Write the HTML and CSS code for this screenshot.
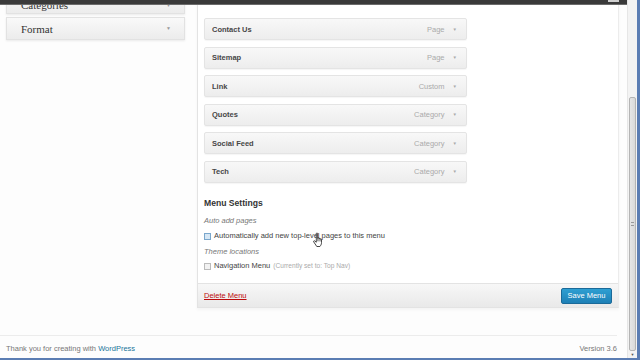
FILE: index.html
```html
<!DOCTYPE html>
<html lang="en">
<head>
    <meta charset="UTF-8">
    <meta name="viewport" content="width=device-width, initial-scale=1.0">
    <title>Menus</title>
    <link rel="stylesheet" href="styles.css">
</head>
<body>
    <div class="window">
        <div class="page">
            <div class="adminbar"><span class="adminbar-avatar"></span></div>

            <div class="columns">
                <div class="sidebar">
                    <div class="accordion-item cut">Categories <span class="caret">&#9660;</span></div>
                    <div class="accordion-item">Format <span class="caret">&#9660;</span></div>
                </div>

                <div class="menu-panel">
                    <div class="menu-body">
                        <ul class="menu-items">
                            <li class="menu-item"><span class="item-title">Contact Us</span><span class="item-type">Page</span><span class="caret">&#9660;</span></li>
                            <li class="menu-item"><span class="item-title">Sitemap</span><span class="item-type">Page</span><span class="caret">&#9660;</span></li>
                            <li class="menu-item"><span class="item-title">Link</span><span class="item-type">Custom</span><span class="caret">&#9660;</span></li>
                            <li class="menu-item"><span class="item-title">Quotes</span><span class="item-type">Category</span><span class="caret">&#9660;</span></li>
                            <li class="menu-item"><span class="item-title">Social Feed</span><span class="item-type">Category</span><span class="caret">&#9660;</span></li>
                            <li class="menu-item"><span class="item-title">Tech</span><span class="item-type">Category</span><span class="caret">&#9660;</span></li>
                        </ul>

                        <div class="menu-settings">
                            <h3>Menu Settings</h3>
                            <div class="setting-label">Auto add pages</div>
                            <label class="setting-row"><span class="checkbox hover"></span>Automatically add new top-level pages to this menu</label>
                            <div class="setting-label">Theme locations</div>
                            <label class="setting-row"><span class="checkbox"></span>Navigation Menu <span class="note">(Currently set to: Top Nav)</span></label>
                        </div>
                    </div>
                    <div class="menu-footer">
                        <a class="delete-link" href="#">Delete Menu</a>
                        <button class="save-btn">Save Menu</button>
                    </div>
                </div>
            </div>

            <div class="page-footer">
                <span>Thank you for creating with <a href="#">WordPress</a></span>
                <span>Version 3.6</span>
            </div>

            <svg class="cursor" width="12" height="16" viewBox="0 0 14 18">
                <path d="M5 1.5c0-.9 1.6-.9 1.6 0V7c0-.8 1.5-.8 1.5 0v.6c0-.8 1.5-.8 1.5 0v.6c0-.8 1.5-.8 1.5 0V12c0 2-.9 3.4-1.9 4.6H5.6L2 11.2c-.6-.8.4-1.7 1.2-1.1L5 11.6Z" fill="#fff" stroke="#111" stroke-width=".9" stroke-linejoin="round"/>
                <path d="M6.6 7v3.5M8.1 7.6v3M9.6 8.2v2.5" stroke="#111" stroke-width=".6" fill="none"/>
            </svg>
        </div>

        <div class="scrollbar">
            <div class="scroll-thumb"><span class="grip"></span></div>
            <div class="scroll-arrow">&#9660;</div>
        </div>
    </div>
</body>
</html>
```

FILE: styles.css
```css
* { box-sizing: border-box; }

body {
    margin: 0;
    font-family: "Liberation Sans", Arial, sans-serif;
    font-size: 7.5px;
    color: #333;
    background: #fff;
}

.window {
    width: 640px;
    height: 360px;
    display: flex;
    border-right: 3px solid #5b7db3;
    border-bottom: 2px solid #5b7db3;
    overflow: hidden;
}

.page {
    flex: 1;
    position: relative;
    display: flex;
    flex-direction: column;
    overflow: hidden;
    background: #fdfdfd;
}

.adminbar {
    position: absolute;
    top: 0;
    left: 0;
    right: 0;
    height: 5px;
    background: #3a3a3a;
    border-bottom: 1px solid #6b6b6b;
    z-index: 2;
}
.adminbar-avatar {
    position: absolute;
    right: 8px;
    top: 0;
    width: 11px;
    height: 2px;
    background: #cfcfcf;
}

.columns {
    display: flex;
    gap: 12px;
    padding-left: 6px;
}

/* left accordion */
.sidebar {
    width: 179px;
    display: flex;
    flex-direction: column;
    gap: 3px;
    margin-top: -9px;
}
.accordion-item {
    height: 23px;
    display: flex;
    align-items: center;
    justify-content: space-between;
    padding: 0 13px 0 14px;
    font-family: "Liberation Serif", "Times New Roman", serif;
    font-size: 11px;
    color: #333;
    background: linear-gradient(#f9f9f9, #ececec);
    border: 1px solid #e2e2e2;
    box-shadow: 0 1px 2px rgba(0, 0, 0, 0.08);
}
.accordion-item.cut {
    align-items: flex-end;
    padding-bottom: 2px;
}
.accordion-item .caret { font-size: 5px; color: #999; }
.accordion-item.cut .caret { padding-bottom: 3px; }

/* menu panel */
.menu-panel {
    width: 422px;
    display: flex;
    flex-direction: column;
    border-left: 1px solid #e3e3e3;
    border-right: 1px solid #ececec;
    border-bottom: 1px solid #e3e3e3;
    box-shadow: 0 2px 3px rgba(0, 0, 0, 0.04);
}
.menu-body {
    background: #fff;
    padding: 18px 6px 12px 6px;
}
.menu-items {
    list-style: none;
    margin: 0;
    padding: 0;
}
.menu-item {
    width: 263px;
    height: 22px;
    margin-bottom: 6.6px;
    display: flex;
    align-items: center;
    padding: 0 9px 0 7px;
    background: linear-gradient(#f8f8f8, #ededed);
    border: 1px solid #e4e4e4;
    border-radius: 2px;
    box-shadow: 0 1px 1px rgba(0, 0, 0, 0.04);
}
.item-title {
    flex: 1;
    font-weight: bold;
    color: #464646;
}
.item-type { color: #aaa; }
.menu-item .caret {
    font-size: 4.5px;
    color: #aaa;
    margin-left: 8px;
}

.menu-settings h3 {
    margin: 15px 0 0;
    font-size: 8.6px;
    line-height: 11px;
    color: #333;
}
.setting-label {
    margin-top: 7.5px;
    line-height: 10px;
    font-style: italic;
    color: #777;
}
.setting-row {
    display: flex;
    align-items: center;
    gap: 3px;
    margin-top: 5px;
    line-height: 10px;
    color: #444;
}
.setting-row + .setting-label { margin-top: 6px; }
.setting-label + .setting-row:last-child { margin-top: 4px; }
.checkbox {
    width: 7px;
    height: 7px;
    border: 1px solid #bbb;
    background: #f2f2f2;
}
.checkbox.hover {
    border-color: #7aa7cc;
    background: #d6e7f5;
}
.note { color: #aaa; font-size: 6.6px; }

.menu-footer {
    height: 24px;
    display: flex;
    align-items: center;
    justify-content: space-between;
    padding: 0 6px;
    background: linear-gradient(#f7f7f7, #e9e9e9);
    border-top: 1px solid #e3e3e3;
}
.delete-link {
    color: #bc0b0b;
    text-decoration: underline;
}
.save-btn {
    width: 51px;
    height: 16px;
    padding: 0;
    font-family: inherit;
    font-size: 7.5px;
    color: #fff;
    background: linear-gradient(#2e9fd2, #1e80b6);
    border: 1px solid #1b6a99;
    border-radius: 2px;
}

/* page footer */
.page-footer {
    margin-top: auto;
    margin-right: 10px;
    height: 23px;
    display: flex;
    justify-content: space-between;
    align-items: center;
    padding: 3px 0 0 6px;
    border-top: 1px solid #ececec;
    color: #777;
}
.page-footer a {
    color: #21759b;
    text-decoration: none;
}

.cursor {
    position: absolute;
    left: 312px;
    top: 232px;
}

/* scrollbar */
.scrollbar {
    width: 10px;
    display: flex;
    flex-direction: column;
    background: #f3f3f3;
    border-left: 1px solid #e6e6e6;
    padding-top: 97px;
}
.scroll-thumb {
    flex: 1;
    display: flex;
    align-items: center;
    justify-content: center;
    background: linear-gradient(90deg, #e6e6e6, #d9d9d9);
    border: 1px solid #b4b4b4;
    border-radius: 2px;
    margin: 0 1px;
}
.grip {
    width: 3px;
    height: 4px;
    border-top: 1px solid #999;
    border-bottom: 1px solid #999;
}
.scroll-arrow {
    height: 7px;
    font-size: 4px;
    line-height: 7px;
    text-align: center;
    color: #555;
}
```
